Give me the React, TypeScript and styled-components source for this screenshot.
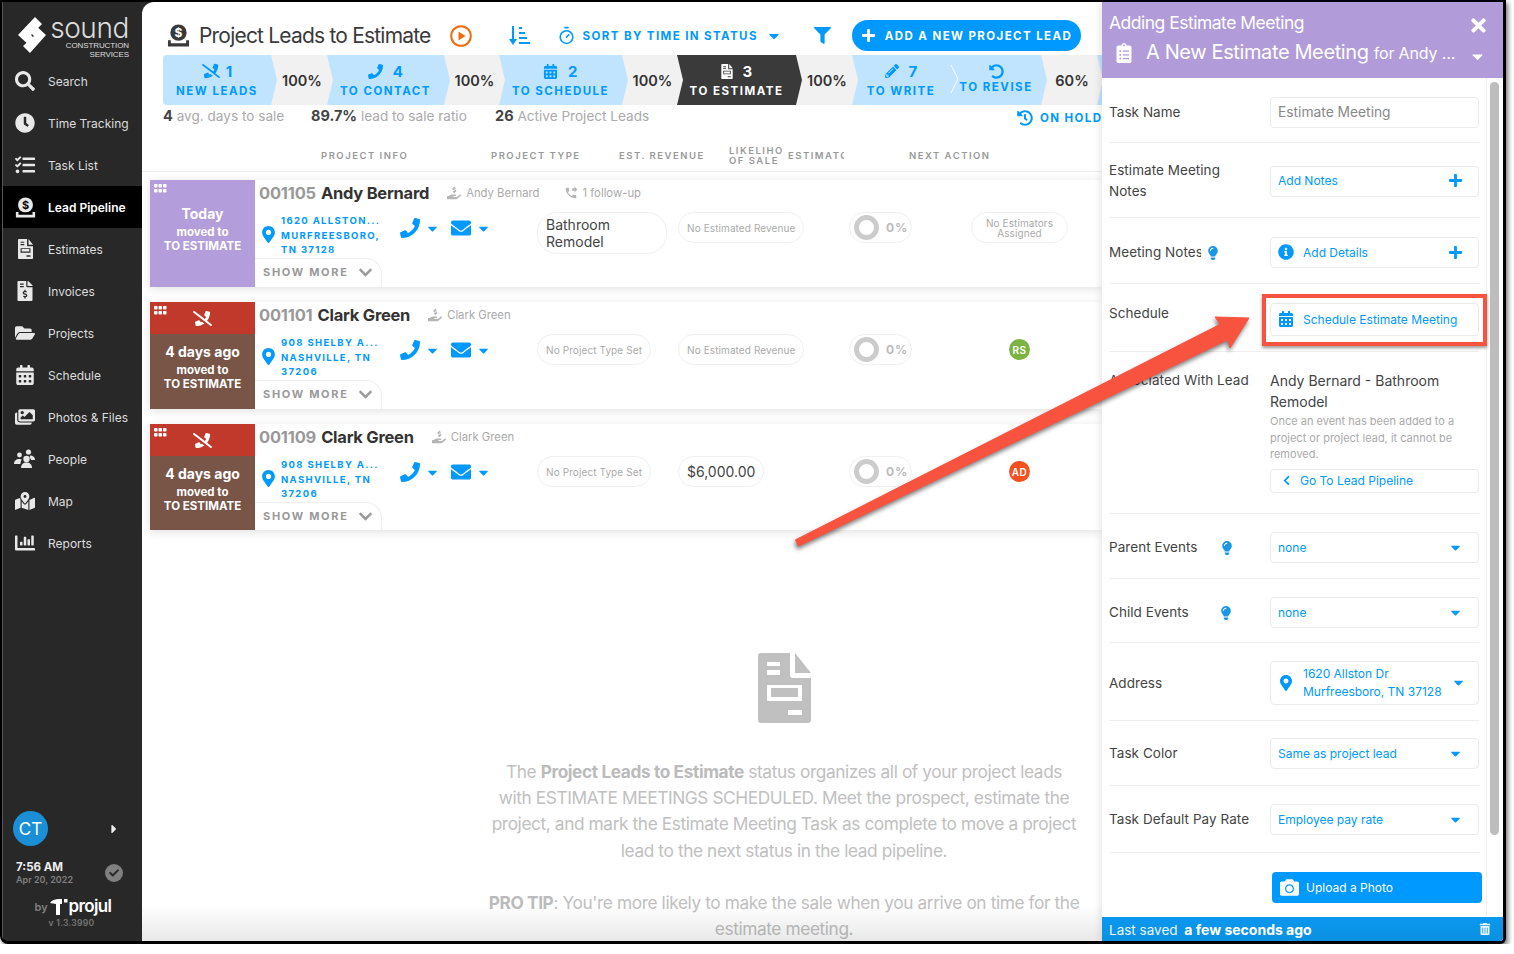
import React from 'react';
import styled, { createGlobalStyle } from 'styled-components';
import {
  FaSearch, FaClock, FaTasks, FaFileInvoiceDollar, FaFolderOpen, FaCalendarAlt, FaImages,
  FaMapMarkedAlt, FaChartBar, FaPhoneSlash, FaPhone, FaEnvelope, FaMapMarkerAlt, FaPencilAlt,
  FaUndoAlt, FaHistory, FaFilter, FaPlus, FaCaretDown, FaCaretRight, FaCheck, FaChevronDown,
  FaChevronLeft, FaLightbulb, FaInfoCircle, FaCamera, FaTrashAlt, FaTimes, FaClipboardList,
  FaHandHoldingUsd,
} from 'react-icons/fa';
import { MdPhoneForwarded } from 'react-icons/md';
import { Timer } from 'lucide-react';

const BLUE = '#0099ff';

const GlobalStyle = createGlobalStyle`
  html, body { margin: 0; padding: 0; background: #fff; }
  body { font-family: Inter, "Noto Sans", sans-serif; color: #444; overflow: hidden; }
  * { box-sizing: border-box; }
  svg { flex: none; }
`;

/* hand drawn icons */
const CoinTray: React.FC<{ size: number; cut: string }> = ({ size, cut }) => (
  <svg width={size} height={size} viewBox="0 0 24 24" fill="currentColor">
    <circle cx="12" cy="9" r="8.5" />
    <text x="12" y="13.5" textAnchor="middle" fontSize="12.5" fontWeight="700" fontFamily="Inter" fill={cut}>$</text>
    <path d="M1 17h3v3.2h16V17h3v6.5H1z" />
  </svg>
);

const EstimateDoc: React.FC<{ w: number; h: number }> = ({ w, h }) => (
  <svg width={w} height={h} viewBox="0 0 53 70" fill="currentColor">
    <path
      fillRule="evenodd"
      d="M3 0H32V22a3 3 0 0 0 3 3H53V67a3 3 0 0 1-3 3H3a3 3 0 0 1-3-3V3a3 3 0 0 1 3-3zM9 9v4H22V9zM9 17v5H22V17zM9 32V48H44V32zM13 35H40V44H13zM30 57v5H44V57z"
    />
    <path d="M37 0L53 20H37z" />
  </svg>
);

const PeopleIcon = () => (
  <svg width="22" height="20" viewBox="0 0 22 20" fill="currentColor">
    <circle cx="14.5" cy="3" r="2.6" />
    <circle cx="5.5" cy="6" r="2.4" />
    <circle cx="12.5" cy="10" r="3.2" />
    <path d="M0 15c0-3 2-5 5.5-5 1 0 1.7.2 2.3.5-.9 1.2-1.3 3-1.3 4.500z" />
    <path d="M16 6.500c3 0 5 1.500 5 4.500h-3.800c-.3-1-.8-2-1.600-2.600.3-.6.4-1.200.4-1.900z" />
    <path d="M7 19c0-3.500 2.200-5.500 5.500-5.500S18 15.500 18 19z" />
  </svg>
);

const SortIcon = () => (
  <svg width="21" height="21" viewBox="0 0 21 21" fill="none" stroke={BLUE} strokeWidth="2">
    <path d="M4 1v17" />
    <path d="M0 14h8l-4 6z" fill={BLUE} stroke="none" />
    <path d="M10 3h3M10 8h6M10 13h8M10 18h11" />
  </svg>
);

const PlayRing = () => (
  <svg width="22" height="22" viewBox="0 0 22 22">
    <circle cx="11" cy="11" r="9.800" fill="none" stroke="#f06a0f" strokeWidth="2" />
    <path d="M8.500 6.500l7 4.500-7 4.500z" fill="#f06a0f" />
  </svg>
);

const DotsIcon = () => (
  <svg width="13" height="10" viewBox="0 0 13 10" fill="#fff">
    {[0, 4.5, 9].map(x => [0, 5].map(y => <rect key={`${x}-${y}`} x={x} y={y} width="3.500" height="3.500" rx=".8" />))}
  </svg>
);

const LogoMark = () => (
  <svg width="30" height="38" viewBox="17 16 28 38" fill="#fff">
    <polygon points="17,35 34,17 41,24 30,35 36,41 30,47" />
    <polygon points="45,35 29,53 22,46 33,36 27,30 33,24" />
  </svg>
);

const ProjulHammer = () => (
  <svg width="18" height="17" viewBox="0 0 18 17" fill="#fff">
    <path d="M0 5c2-3 5-4 9-4h3v5h-2v11H6V6C4 5.500 2 5.500 0 5z" />
    <rect x="14" y="1" width="3.500" height="3.500" />
  </svg>
);

/* page frame */
const Frame = styled.div`
  position: relative;
  display: flex;
  width: 1506px;
  height: 944px;
  background: #282828;
  border: solid #000;
  border-width: 2px 3px 3px 2px;
  border-radius: 0 0 6px 8px;
  box-shadow: 2px 3px 5px rgba(0, 0, 0, 0.55);
  overflow: hidden;
`;

/* sidebar */
const Sidebar = styled.aside`
  display: flex;
  flex-direction: column;
  flex: none;
  width: 140px;
  border-left: 1px solid #555;
  color: #ddd;
`;

const Logo = styled.div`
  display: flex;
  align-items: flex-start;
  justify-content: space-between;
  height: 58px;
  padding: 14px 13px 0 14px;
`;

const LogoText = styled.div`
  display: flex;
  flex-direction: column;
  align-items: flex-end;
  color: #ddd;
`;

const LogoWord = styled.span`
  font-size: 28px;
  font-weight: 300;
  line-height: 25px;
  letter-spacing: -0.4px;
`;

const LogoSub = styled.span`
  font-family: "Liberation Sans", sans-serif;
  font-size: 8px;
  line-height: 9px;
  letter-spacing: -0.1px;
`;

const NavItem = styled.div<{ $active?: boolean }>`
  display: flex;
  align-items: center;
  height: 42px;
  padding-left: 10px;
  font-size: 12px;
  font-weight: ${p => (p.$active ? 600 : 400)};
  color: ${p => (p.$active ? '#fff' : '#ddd')};
  background: ${p => (p.$active ? '#000' : 'transparent')};
`;

const NavIcon = styled.span`
  display: flex;
  align-items: center;
  justify-content: center;
  width: 24px;
  margin-right: 11px;
  font-size: 20px;
  color: #e8e8e8;
`;

const SideFoot = styled.div`
  display: flex;
  flex-direction: column;
  margin-top: auto;
  padding: 0 0 13px 10px;
`;

const UserRow = styled.div`
  display: flex;
  align-items: center;
  justify-content: space-between;
  padding-right: 21px;
  color: #eee;
  font-size: 14px;
`;

const Avatar = styled.div`
  display: flex;
  align-items: center;
  justify-content: center;
  width: 35px;
  height: 35px;
  border-radius: 50%;
  background: #1a8fd6;
  color: #fff;
  font-size: 17px;
`;

const ClockRow = styled.div`
  display: flex;
  align-items: center;
  justify-content: space-between;
  margin-top: 15px;
  padding: 0 19px 0 3px;
`;

const TimeText = styled.div`
  font-size: 11.500px;
  font-weight: 700;
  line-height: 13px;
  color: #eee;
`;

const DateText = styled.div`
  font-size: 9px;
  font-weight: 600;
  line-height: 11px;
  color: #808080;
`;

const SyncCheck = styled.div`
  display: flex;
  align-items: center;
  justify-content: center;
  width: 18px;
  height: 18px;
  border-radius: 50%;
  background: #808080;
  color: #282828;
  font-size: 10px;
`;

const ByRow = styled.div`
  display: flex;
  align-items: center;
  justify-content: center;
  margin-top: 13px;
  padding-right: 9px;
  color: #808080;
  font-size: 11px;
  font-weight: 600;
`;

const ProjulWord = styled.span`
  font-size: 17px;
  font-weight: 600;
  color: #fff;
  letter-spacing: -0.6px;
  line-height: 17px;
`;

const VersionText = styled.div`
  margin-top: 3px;
  padding-right: 12px;
  text-align: center;
  font-size: 8.500px;
  font-weight: 600;
  color: #777;
  letter-spacing: 0.3px;
`;

/* main column */
const Main = styled.main`
  position: relative;
  display: flex;
  flex-direction: column;
  flex: none;
  width: 960px;
  height: 100%;
  background: #fff;
  border-top-left-radius: 12px;
  overflow: hidden;
`;

const TopBar = styled.div`
  display: flex;
  align-items: center;
  flex: none;
  height: 53px;
  padding: 14px 21px 0 25px;
  color: #3a3a3a;
`;

const PageTitle = styled.h1`
  margin: 0 19px 0 9px;
  font-size: 21px;
  font-weight: 400;
  letter-spacing: -0.8px;
  white-space: nowrap;
  color: #3a3a3a;
`;

const BlueAction = styled.span<{ $left: number }>`
  display: flex;
  align-items: center;
  margin-left: ${p => p.$left}px;
  color: ${BLUE};
`;

const SortLabel = styled.span`
  margin: 0 8px 0 7px;
  font-size: 11.500px;
  font-weight: 700;
  letter-spacing: 1.400px;
  white-space: nowrap;
`;

const AddButton = styled.button`
  display: flex;
  align-items: center;
  justify-content: center;
  gap: 9px;
  flex: none;
  width: 229px;
  height: 31px;
  margin-left: auto;
  border: 0;
  border-radius: 16px;
  background: ${BLUE};
  color: #fff;
  font-family: inherit;
  font-size: 11.500px;
  font-weight: 700;
  letter-spacing: 1.400px;
  white-space: nowrap;
`;

const Pipeline = styled.div`
  display: flex;
  flex: none;
  height: 50px;
  margin-left: 21px;
  background: #f1f1f1;
  border-radius: 4px 0 0 4px;
  overflow: hidden;
`;

const Stage = styled.div<{ $w: number; $dark?: boolean; $first?: boolean }>`
  position: relative;
  display: flex;
  flex-direction: column;
  align-items: center;
  flex: none;
  width: ${p => p.$w}px;
  height: 50px;
  padding: 6px 6px 0 0;
  background: ${p => (p.$dark ? '#3a3a3a' : '#c0e4fd')};
  color: ${p => (p.$dark ? '#fff' : BLUE)};
  clip-path: ${p =>
    p.$first
      ? 'polygon(0 0, calc(100% - 6px) 0, 100% 50%, calc(100% - 6px) 100%, 0 100%)'
      : 'polygon(0 0, calc(100% - 6px) 0, 100% 50%, calc(100% - 6px) 100%, 0 100%, 6px 50%)'};
`;

const StageCount = styled.div`
  display: flex;
  align-items: center;
  justify-content: center;
  gap: 6px;
  height: 20px;
  font-size: 15px;
  font-weight: 700;
`;

const StageName = styled.div`
  margin-top: 3px;
  font-size: 11.500px;
  font-weight: 700;
  letter-spacing: 1.500px;
  line-height: 14px;
  white-space: nowrap;
`;

const RevisedName = styled(StageName)`
  margin-top: -1px;
`;

const Percent = styled.div<{ $w: number }>`
  display: flex;
  align-items: center;
  justify-content: center;
  flex: none;
  width: ${p => p.$w}px;
  font-size: 14.500px;
  font-weight: 600;
  color: #333;
`;

const SplitRow = styled.div`
  display: flex;
  align-self: flex-start;
`;

const SplitCell = styled.div<{ $w: number }>`
  display: flex;
  flex-direction: column;
  align-items: center;
  flex: none;
  width: ${p => p.$w}px;
`;

const SplitTip = styled.svg`
  position: absolute;
  left: 98px;
  top: 0;
`;

const StatsRow = styled.div`
  display: flex;
  align-items: center;
  flex: none;
  height: 26px;
  padding: 0 0 6px 21px;
  font-size: 13.600px;
  color: #aaa;
`;

const Stat = styled.span<{ $w: number }>`
  flex: none;
  width: ${p => p.$w}px;
  white-space: nowrap;
  b { color: #444; font-weight: 700; font-size: 14.500px; }
`;

const OnHold = styled.span`
  display: flex;
  align-items: center;
  gap: 7px;
  margin-left: 368px;
  padding-top: 5px;
  color: ${BLUE};
  font-size: 11.500px;
  font-weight: 700;
  letter-spacing: 1.400px;
  white-space: nowrap;
`;

const ColumnHeads = styled.div`
  display: flex;
  align-items: center;
  flex: none;
  height: 41px;
  padding: 9px 0 0 179px;
  border-bottom: 1px solid #eee;
  color: #999;
  font-size: 9.500px;
  font-weight: 600;
  letter-spacing: 1.500px;
  line-height: 10px;
`;

const ColumnHead = styled.div<{ $w: number }>`
  flex: none;
  width: ${p => p.$w}px;
  overflow: hidden;
  white-space: nowrap;
`;

const LeadList = styled.div`
  display: flex;
  flex-direction: column;
  gap: 15px;
  flex: none;
  padding: 8px 0 0 8px;
`;

const LeadRow = styled.div<{ $h: number }>`
  display: flex;
  flex: none;
  height: ${p => p.$h}px;
  background: #fff;
  box-shadow: 0 2px 9px rgba(0, 0, 0, 0.12);
`;

const StatusCol = styled.div<{ $late?: boolean }>`
  position: relative;
  display: flex;
  flex-direction: column;
  flex: none;
  width: 105px;
  background: ${p => (p.$late ? '#795548' : '#b39ddb')};
  color: #fff;
  text-align: center;
`;

const DotsBadge = styled.span`
  position: absolute;
  left: 4px;
  top: 4px;
  display: flex;
`;

const AlertBar = styled.div`
  display: flex;
  align-items: center;
  justify-content: center;
  flex: none;
  height: 32px;
  background: #c0392b;
  font-size: 19px;
`;

const StatusText = styled.div<{ $late?: boolean }>`
  padding-top: ${p => (p.$late ? '9px' : '25px')};
  font-size: 11.500px;
  font-weight: 700;
  line-height: 14px;
`;

const StatusAge = styled.div`
  margin-bottom: 2px;
  font-size: 14px;
  font-weight: 700;
  line-height: 18px;
`;

const RowBody = styled.div`
  display: flex;
  flex-direction: column;
  flex: 1;
  min-width: 0;
`;

const RowTitle = styled.div`
  display: flex;
  align-items: center;
  flex: none;
  height: 32px;
  padding: 0 0 7px 4px;
  white-space: nowrap;
`;

const LeadId = styled.span`
  font-size: 16.500px;
  font-weight: 700;
  letter-spacing: -0.2px;
  color: #999;
`;

const LeadName = styled.span`
  margin-left: 5px;
  font-size: 16.500px;
  font-weight: 700;
  letter-spacing: -0.25px;
  color: #333;
`;

const RowMeta = styled.span<{ $left: number }>`
  display: flex;
  align-items: center;
  gap: 5px;
  margin-left: ${p => p.$left}px;
  font-size: 11.300px;
  color: #aaa;
  svg { color: #b5b5b5; font-size: 14px; }
`;

const RowCells = styled.div`
  display: flex;
  flex: 1;
`;

const InfoCol = styled.div`
  display: flex;
  flex-direction: column;
  flex: none;
  width: 282px;
`;

const AddressRow = styled.div`
  display: flex;
  align-items: flex-start;
  height: 46px;
  padding-left: 5px;
  color: ${BLUE};
`;

const PinSlot = styled.span`
  display: flex;
  align-items: center;
  height: 44px;
  margin-right: 4px;
  font-size: 17px;
`;

const AddressText = styled.div`
  flex: none;
  width: 119px;
  padding-top: 2px;
  font-size: 9.500px;
  font-weight: 700;
  letter-spacing: 1.350px;
  line-height: 14.500px;
  white-space: nowrap;
`;

const Contact = styled.span<{ $w: number }>`
  display: flex;
  align-items: center;
  gap: 5px;
  flex: none;
  width: ${p => p.$w}px;
  height: 32px;
  font-size: 20px;
  svg + svg { font-size: 15px; }
`;

const ShowMore = styled.div`
  display: flex;
  align-items: center;
  gap: 9px;
  width: 127px;
  height: 29px;
  margin-top: auto;
  padding: 0 0 2px 8px;
  border: solid #eee;
  border-width: 1px 1px 0 0;
  border-top-right-radius: 16px;
  color: #999;
  font-size: 11px;
  font-weight: 700;
  letter-spacing: 1.700px;
  white-space: nowrap;
  svg { font-size: 15px; }
`;

const Cell = styled.div<{ $w: number; $center?: boolean }>`
  display: flex;
  align-items: flex-start;
  justify-content: ${p => (p.$center ? 'center' : 'flex-start')};
  flex: none;
  width: ${p => p.$w}px;
`;

const Pill = styled.div<{ $tall?: boolean; $strong?: boolean }>`
  display: flex;
  align-items: center;
  height: ${p => (p.$tall ? '42px' : '31px')};
  padding: 0 8px;
  border: 1px solid #f0f0f0;
  border-radius: 20px;
  color: ${p => (p.$strong ? '#444' : '#aaa')};
  font-size: ${p => (p.$strong ? '14px' : '10px')};
  line-height: ${p => (p.$strong ? '17px' : '10px')};
  letter-spacing: ${p => (p.$strong ? '0' : '0.1px')};
  text-align: center;
  white-space: nowrap;
`;

const TypePill = styled(Pill)`
  width: ${p => (p.$tall ? '130px' : 'auto')};
  text-align: left;
`;

const NextPill = styled(Pill)`
  justify-content: center;
  width: 97px;
`;

const RatePill = styled(Pill)`
  gap: 7px;
  width: 63px;
  padding: 0 4px;
  font-size: 12px;
  font-weight: 700;
  letter-spacing: 1px;
  color: #bbb;
`;

const Ring = styled.span`
  flex: none;
  width: 25px;
  height: 25px;
  border: 5px solid #ccc;
  border-radius: 50%;
`;

const Initials = styled.div<{ $color: string }>`
  display: flex;
  align-items: center;
  justify-content: center;
  width: 21px;
  height: 21px;
  margin-top: 5px;
  border-radius: 50%;
  background: ${p => p.$color};
  color: #fff;
  font-size: 10px;
  font-weight: 600;
  letter-spacing: 0.5px;
`;

const EmptyState = styled.div`
  display: flex;
  flex-direction: column;
  align-items: center;
  flex: none;
  width: 610px;
  margin: 123px 0 0 337px;
  color: #c0c0c0;
  text-align: center;
`;

const EmptyCopy = styled.p`
  margin: 0;
  font-size: 17.300px;
  letter-spacing: -0.4px;
  line-height: 26.200px;
  white-space: nowrap;
  b { font-weight: 700; color: #bbb; }
`;

const EmptyIcon = styled.div`
  display: flex;
  margin-bottom: 36px;
`;

const TipCopy = styled(EmptyCopy)`
  margin-top: 26px;
`;

const BottomFade = styled.div`
  position: absolute;
  left: 0;
  right: 0;
  bottom: 0;
  height: 36px;
  background: linear-gradient(to bottom, rgba(0, 0, 0, 0), rgba(0, 0, 0, 0.09));
`;

/* right hand panel */
const Panel = styled.section`
  position: relative;
  z-index: 2;
  display: flex;
  flex-direction: column;
  flex: none;
  width: 401px;
  height: 100%;
  background: #fff;
  box-shadow: -3px 0 6px rgba(0, 0, 0, 0.08);
`;

const PanelHead = styled.header`
  display: flex;
  flex-direction: column;
  flex: none;
  height: 76px;
  padding: 8px 14px 0 7px;
  background: #b19cd9;
  color: #fff;
`;

const HeadLine = styled.div`
  display: flex;
  align-items: center;
  justify-content: space-between;
  white-space: nowrap;
`;

const HeadTitle = styled.span`
  font-size: 17.500px;
  line-height: 22px;
  letter-spacing: -0.5px;
`;

const CloseMark = styled.span`
  display: flex;
  margin-top: 5px;
  font-size: 21px;
`;

const HeadSub = styled.span`
  display: flex;
  align-items: baseline;
  font-size: 20px;
  letter-spacing: -0.38px;
  line-height: 27px;
  small { margin-left: 5px; font-size: 16px; letter-spacing: -0.15px; }
`;

const SubIcon = styled.span`
  display: flex;
  align-items: center;
  margin-right: 12px;
  margin-left: 5px;
  font-size: 20px;
`;

const SubLeft = styled.div`
  display: flex;
  align-items: center;
  margin-top: 3px;
`;

const HeadCaret = styled.span`
  display: flex;
  margin: 9px 3px 0 0;
  font-size: 17px;
`;

const PanelScroll = styled.div`
  display: flex;
  flex: 1;
  min-height: 0;
  overflow: hidden;
`;

const FormCol = styled.div`
  flex: 1;
  min-width: 0;
  padding: 0 7px;
  border-right: 1px solid #eee;
`;

const ScrollTrack = styled.div`
  flex: none;
  width: 16px;
  padding: 4px 4px 0 3px;
`;

const ScrollThumb = styled.div`
  height: 753px;
  border-radius: 5px;
  background: #bdbdbd;
`;

const FormRow = styled.div<{ $top?: number; $bottom?: number; $start?: boolean }>`
  display: flex;
  align-items: ${p => (p.$start ? 'flex-start' : 'center')};
  padding: ${p => p.$top ?? 18}px 0 ${p => p.$bottom ?? 14}px;
  border-bottom: 1px solid #eee;
`;

const FieldLabel = styled.div`
  display: flex;
  align-items: center;
  flex: none;
  width: 161px;
  font-size: 13.500px;
  line-height: 21px;
  letter-spacing: 0.05px;
  color: #444;
  white-space: nowrap;
`;

const ClippedLabel = styled.span`
  overflow: hidden;
  width: 92px;
`;

const TipBulb = styled.span<{ $left: number }>`
  display: flex;
  margin-left: ${p => p.$left}px;
  color: #1a98e6;
  font-size: 14px;
`;

const Field = styled.div<{ $h?: number; $plain?: boolean; $gap?: number }>`
  display: flex;
  align-items: center;
  gap: ${p => p.$gap ?? 9}px;
  flex: none;
  width: 209px;
  height: ${p => p.$h ?? 31}px;
  padding: 0 15px 1px 7px;
  border: 1px solid #eaeaea;
  border-radius: 4px;
  color: ${p => (p.$plain ? '#888' : BLUE)};
  font-size: ${p => (p.$plain ? '13.800px' : '12px')};
  white-space: nowrap;
`;

const FieldEnd = styled.span`
  display: flex;
  margin-left: auto;
  font-size: 15px;
`;

const FieldIcon = styled.span`
  display: flex;
  flex: none;
  justify-content: center;
  width: 16px;
  font-size: 16px;
`;

const TwoLine = styled.span`
  line-height: 18px;
`;

const LinkedBlock = styled.div`
  flex: none;
  width: 209px;
`;

const LinkedName = styled.div`
  font-size: 14px;
  line-height: 21px;
  color: #444;
`;

const HintText = styled.div`
  margin: 1px 0 6px;
  font-size: 11px;
  line-height: 16.700px;
  color: #aaa;
`;

const UploadRow = styled.div`
  display: flex;
  padding: 19px 0 0 163px;
`;

const UploadButton = styled.button`
  display: flex;
  align-items: center;
  gap: 7px;
  flex: none;
  width: 210px;
  height: 31px;
  padding: 0 0 0 8px;
  border: 0;
  border-radius: 4px;
  background: ${BLUE};
  color: #fff;
  font-family: inherit;
  font-size: 12px;
  svg { font-size: 19px; }
`;

const SaveBar = styled.footer`
  display: flex;
  align-items: center;
  justify-content: space-between;
  flex: none;
  height: 24px;
  padding: 0 12px 0 7px;
  background: linear-gradient(to bottom, #0b98ef, #0a90e2);
  color: #eaf6ff;
  font-size: 13.500px;
  b { margin-left: 3px; font-size: 14px; font-weight: 700; color: #fff; }
  svg { font-size: 12px; }
`;

/* annotation on top of the screenshot */
const CalloutBox = styled.div`
  position: absolute;
  left: 1260px;
  top: 292px;
  width: 225px;
  height: 52px;
  z-index: 4;
  border: 4px solid #f8533f;
  box-shadow: 0 2px 3px rgba(0, 0, 0, 0.4);
`;

const CalloutArrow = styled.svg`
  position: absolute;
  left: -2px;
  top: -2px;
  z-index: 4;
  pointer-events: none;
  filter: drop-shadow(-1px 3px 2px rgba(0, 0, 0, 0.5));
`;

const navItems: { label: string; icon: React.ReactNode; active?: boolean }[] = [
  { label: 'Search', icon: <FaSearch /> },
  { label: 'Time Tracking', icon: <FaClock /> },
  { label: 'Task List', icon: <FaTasks /> },
  { label: 'Lead Pipeline', icon: <CoinTray size={21} cut="#000" />, active: true },
  { label: 'Estimates', icon: <EstimateDoc w={15} h={20} /> },
  { label: 'Invoices', icon: <FaFileInvoiceDollar /> },
  { label: 'Projects', icon: <FaFolderOpen /> },
  { label: 'Schedule', icon: <FaCalendarAlt /> },
  { label: 'Photos & Files', icon: <FaImages /> },
  { label: 'People', icon: <PeopleIcon /> },
  { label: 'Map', icon: <FaMapMarkedAlt /> },
  { label: 'Reports', icon: <FaChartBar /> },
];

const heads: { w: number; label: React.ReactNode }[] = [
  { w: 170, label: 'PROJECT INFO' },
  { w: 128, label: 'PROJECT TYPE' },
  { w: 110, label: 'EST. REVENUE' },
  { w: 59, label: <>LIKELIHO<br />OF SALE</> },
  { w: 56, label: 'ESTIMATORS' },
];

const leads = [
  {
    id: '001105', name: 'Andy Bernard', age: 'Today', h: 107, late: false, followUp: '1 follow-up', metaLeft: 18,
    address: ['1620 ALLSTON...', 'MURFREESBORO,', 'TN 37128'],
  },
  {
    id: '001101', name: 'Clark Green', age: '4 days ago', h: 107, late: true, metaLeft: 18,
    address: ['908 SHELBY A...', 'NASHVILLE, TN', '37206'],
  },
  {
    id: '001109', name: 'Clark Green', age: '4 days ago', h: 106, late: true, metaLeft: 18,
    address: ['908 SHELBY A...', 'NASHVILLE, TN', '37206'],
  },
];

const LeadCard: React.FC<{ lead: (typeof leads)[number]; index: number }> = ({ lead, index }) => (
  <LeadRow $h={lead.h}>
    <StatusCol $late={lead.late}>
      <DotsBadge><DotsIcon /></DotsBadge>
      {lead.late && <AlertBar><FaPhoneSlash /></AlertBar>}
      <StatusText $late={lead.late}>
        <StatusAge>{lead.age}</StatusAge>
        moved to<br />TO ESTIMATE
      </StatusText>
    </StatusCol>
    <RowBody>
      <RowTitle>
        <LeadId>{lead.id}</LeadId>
        <LeadName>{lead.name}</LeadName>
        <RowMeta $left={lead.metaLeft}><FaHandHoldingUsd />{lead.name}</RowMeta>
        {lead.followUp && <RowMeta $left={24}><MdPhoneForwarded />{lead.followUp}</RowMeta>}
      </RowTitle>
      <RowCells>
        <InfoCol>
          <AddressRow>
            <PinSlot><FaMapMarkerAlt /></PinSlot>
            <AddressText>
              {lead.address.map(line => <div key={line}>{line}</div>)}
            </AddressText>
            <Contact $w={51}><FaPhone /><FaCaretDown /></Contact>
            <Contact $w={40}><FaEnvelope /><FaCaretDown /></Contact>
          </AddressRow>
          <ShowMore>SHOW MORE <FaChevronDown /></ShowMore>
        </InfoCol>
        <Cell $w={141}>
          {index === 0
            ? <TypePill $tall $strong>Bathroom<br />Remodel</TypePill>
            : <TypePill>No Project Type Set</TypePill>}
        </Cell>
        <Cell $w={171}>
          {index === 2 ? <Pill $strong>$6,000.00</Pill> : <Pill>No Estimated Revenue</Pill>}
        </Cell>
        <Cell $w={122}>
          <RatePill><Ring />0%</RatePill>
        </Cell>
        <Cell $w={97} $center>
          {index === 0 && <NextPill>No Estimators<br />Assigned</NextPill>}
          {index === 1 && <Initials $color="#7cb342">RS</Initials>}
          {index === 2 && <Initials $color="#f4511e">AD</Initials>}
        </Cell>
      </RowCells>
    </RowBody>
  </LeadRow>
);

const App: React.FC = () => (
  <>
    <GlobalStyle />
    <Frame>
      <Sidebar>
        <Logo>
          <LogoMark />
          <LogoText>
            <LogoWord>sound</LogoWord>
            <LogoSub>CONSTRUCTION</LogoSub>
            <LogoSub>SERVICES</LogoSub>
          </LogoText>
        </Logo>
        {navItems.map(item => (
          <NavItem key={item.label} $active={item.active}>
            <NavIcon>{item.icon}</NavIcon>
            {item.label}
          </NavItem>
        ))}
        <SideFoot>
          <UserRow><Avatar>CT</Avatar><FaCaretRight /></UserRow>
          <ClockRow>
            <div>
              <TimeText>7:56 AM</TimeText>
              <DateText>Apr 20, 2022</DateText>
            </div>
            <SyncCheck><FaCheck /></SyncCheck>
          </ClockRow>
          <ByRow>
            by&nbsp;<ProjulHammer /><ProjulWord>projul</ProjulWord>
          </ByRow>
          <VersionText>v 1.3.3990</VersionText>
        </SideFoot>
      </Sidebar>

      <Main>
        <TopBar>
          <CoinTray size={23} cut="#fff" />
          <PageTitle>Project Leads to Estimate</PageTitle>
          <PlayRing />
          <BlueAction $left={37}><SortIcon /></BlueAction>
          <BlueAction $left={27}>
            <Timer size={19} strokeWidth={2} />
            <SortLabel>SORT BY TIME IN STATUS</SortLabel>
            <FaCaretDown size={16} />
          </BlueAction>
          <BlueAction $left={32}><FaFilter size={17} /></BlueAction>
          <AddButton><FaPlus size={15} />ADD A NEW PROJECT LEAD</AddButton>
        </TopBar>

        <Pipeline>
          <Stage $w={114} $first>
            <StageCount><FaPhoneSlash size={18} />1</StageCount>
            <StageName>NEW LEADS</StageName>
          </Stage>
          <Percent $w={50}>100%</Percent>
          <Stage $w={123}>
            <StageCount><FaPhone size={15} />&nbsp;4</StageCount>
            <StageName>TO CONTACT</StageName>
          </Stage>
          <Percent $w={49}>100%</Percent>
          <Stage $w={129}>
            <StageCount><FaCalendarAlt size={15} />&nbsp;2</StageCount>
            <StageName>TO SCHEDULE</StageName>
          </Stage>
          <Percent $w={49}>100%</Percent>
          <Stage $w={125} $dark>
            <StageCount><EstimateDoc w={12} h={15} />&nbsp;3</StageCount>
            <StageName>TO ESTIMATE</StageName>
          </Stage>
          <Percent $w={50}>100%</Percent>
          <Stage $w={195}>
            <SplitTip width="10" height="50" viewBox="0 0 10 50" fill="none" stroke="#fff" strokeWidth="1">
              <path d="M1 10l7 14-7 14" />
            </SplitTip>
            <SplitRow>
              <SplitCell $w={98}>
                <StageCount><FaPencilAlt size={14} />&nbsp;7</StageCount>
                <StageName>TO WRITE</StageName>
              </SplitCell>
              <SplitCell $w={92}>
                <StageCount><FaUndoAlt size={15} /></StageCount>
                <RevisedName>TO REVISE</RevisedName>
              </SplitCell>
            </SplitRow>
          </Stage>
          <Percent $w={50}>60%</Percent>
          <Stage $w={60} />
        </Pipeline>

        <StatsRow>
          <Stat $w={148}><b>4</b> avg. days to sale</Stat>
          <Stat $w={184}><b>89.7%</b> lead to sale ratio</Stat>
          <Stat $w={154}><b>26</b> Active Project Leads</Stat>
          <OnHold><FaHistory size={16} />ON HOLD</OnHold>
        </StatsRow>

        <ColumnHeads>
          {heads.map((h, i) => <ColumnHead key={i} $w={h.w}>{h.label}</ColumnHead>)}
          <ColumnHead $w={65} />
          <ColumnHead $w={100}>NEXT ACTION</ColumnHead>
        </ColumnHeads>

        <LeadList>
          {leads.map((lead, i) => <LeadCard key={lead.id} lead={lead} index={i} />)}
        </LeadList>

        <EmptyState>
          <EmptyIcon><EstimateDoc w={53} h={70} /></EmptyIcon>
          <EmptyCopy>
            The <b>Project Leads to Estimate</b> status organizes all of your project leads<br />
            with ESTIMATE MEETINGS SCHEDULED. Meet the prospect, estimate the<br />
            project, and mark the Estimate Meeting Task as complete to move a project<br />
            lead to the next status in the lead pipeline.
          </EmptyCopy>
          <TipCopy>
            <b>PRO TIP</b>: You're more likely to make the sale when you arrive on time for the<br />
            estimate meeting.
          </TipCopy>
        </EmptyState>
        <BottomFade />
      </Main>

      <Panel>
        <PanelHead>
          <HeadLine>
            <HeadTitle>Adding Estimate Meeting</HeadTitle>
            <CloseMark><FaTimes /></CloseMark>
          </HeadLine>
          <HeadLine>
            <SubLeft>
              <SubIcon><FaClipboardList /></SubIcon>
              <HeadSub>A New Estimate Meeting <small>for Andy ...</small></HeadSub>
            </SubLeft>
            <HeadCaret><FaCaretDown /></HeadCaret>
          </HeadLine>
        </PanelHead>

        <PanelScroll>
          <FormCol>
            <FormRow $top={19} $bottom={14}>
              <FieldLabel>Task Name</FieldLabel>
              <Field $plain>Estimate Meeting</Field>
            </FormRow>
            <FormRow $top={17} $bottom={15}>
              <FieldLabel>Estimate Meeting<br />Notes</FieldLabel>
              <Field>Add Notes<FieldEnd><FaPlus /></FieldEnd></Field>
            </FormRow>
            <FormRow $top={19} $bottom={15}>
              <FieldLabel>
                <ClippedLabel>Meeting Notes</ClippedLabel>
                <TipBulb $left={5}><FaLightbulb /></TipBulb>
              </FieldLabel>
              <Field><FieldIcon><FaInfoCircle /></FieldIcon>Add Details<FieldEnd><FaPlus /></FieldEnd></Field>
            </FormRow>
            <FormRow $top={19} $bottom={15} $start>
              <FieldLabel>Schedule</FieldLabel>
              <Field $h={33}><FieldIcon><FaCalendarAlt /></FieldIcon>Schedule Estimate Meeting</Field>
            </FormRow>
            <FormRow $top={18} $bottom={20} $start>
              <FieldLabel>Associated With Lead</FieldLabel>
              <LinkedBlock>
                <LinkedName>Andy Bernard - Bathroom Remodel</LinkedName>
                <HintText>Once an event has been added to a project or project lead, it cannot be removed.</HintText>
                <Field $h={24} $gap={6}><FieldIcon><FaChevronLeft size={11} /></FieldIcon>Go To Lead Pipeline</Field>
              </LinkedBlock>
            </FormRow>
            <FormRow $bottom={15}>
              <FieldLabel>Parent Events<TipBulb $left={23}><FaLightbulb /></TipBulb></FieldLabel>
              <Field>none<FieldEnd><FaCaretDown /></FieldEnd></Field>
            </FormRow>
            <FormRow>
              <FieldLabel>Child Events<TipBulb $left={30}><FaLightbulb /></TipBulb></FieldLabel>
              <Field>none<FieldEnd><FaCaretDown /></FieldEnd></Field>
            </FormRow>
            <FormRow $bottom={15}>
              <FieldLabel>Address</FieldLabel>
              <Field $h={44}>
                <FieldIcon><FaMapMarkerAlt /></FieldIcon>
                <TwoLine>1620 Allston Dr<br />Murfreesboro, TN 37128</TwoLine>
                <FieldEnd><FaCaretDown /></FieldEnd>
              </Field>
            </FormRow>
            <FormRow $top={17} $bottom={16}>
              <FieldLabel>Task Color</FieldLabel>
              <Field>Same as project lead<FieldEnd><FaCaretDown /></FieldEnd></Field>
            </FormRow>
            <FormRow $top={18} $bottom={17}>
              <FieldLabel>Task Default Pay Rate</FieldLabel>
              <Field>Employee pay rate<FieldEnd><FaCaretDown /></FieldEnd></Field>
            </FormRow>
            <UploadRow>
              <UploadButton><FaCamera />Upload a Photo</UploadButton>
            </UploadRow>
          </FormCol>
          <ScrollTrack><ScrollThumb /></ScrollTrack>
        </PanelScroll>

        <SaveBar>
          <span>Last saved <b>a few seconds ago</b></span>
          <FaTrashAlt />
        </SaveBar>
      </Panel>

      <CalloutBox />
      <CalloutArrow width="1514" height="954" viewBox="0 0 1514 954">
        <polygon
          fill="#f8533f"
          stroke="#f8533f"
          strokeWidth="1"
          strokeLinejoin="round"
          points="795.4,539.9 1220.2,324.3 1215,317 1249,318 1230,348 1227.8,339.7 798.6,546.1"
        />
      </CalloutArrow>
    </Frame>
  </>
);

export default App;
